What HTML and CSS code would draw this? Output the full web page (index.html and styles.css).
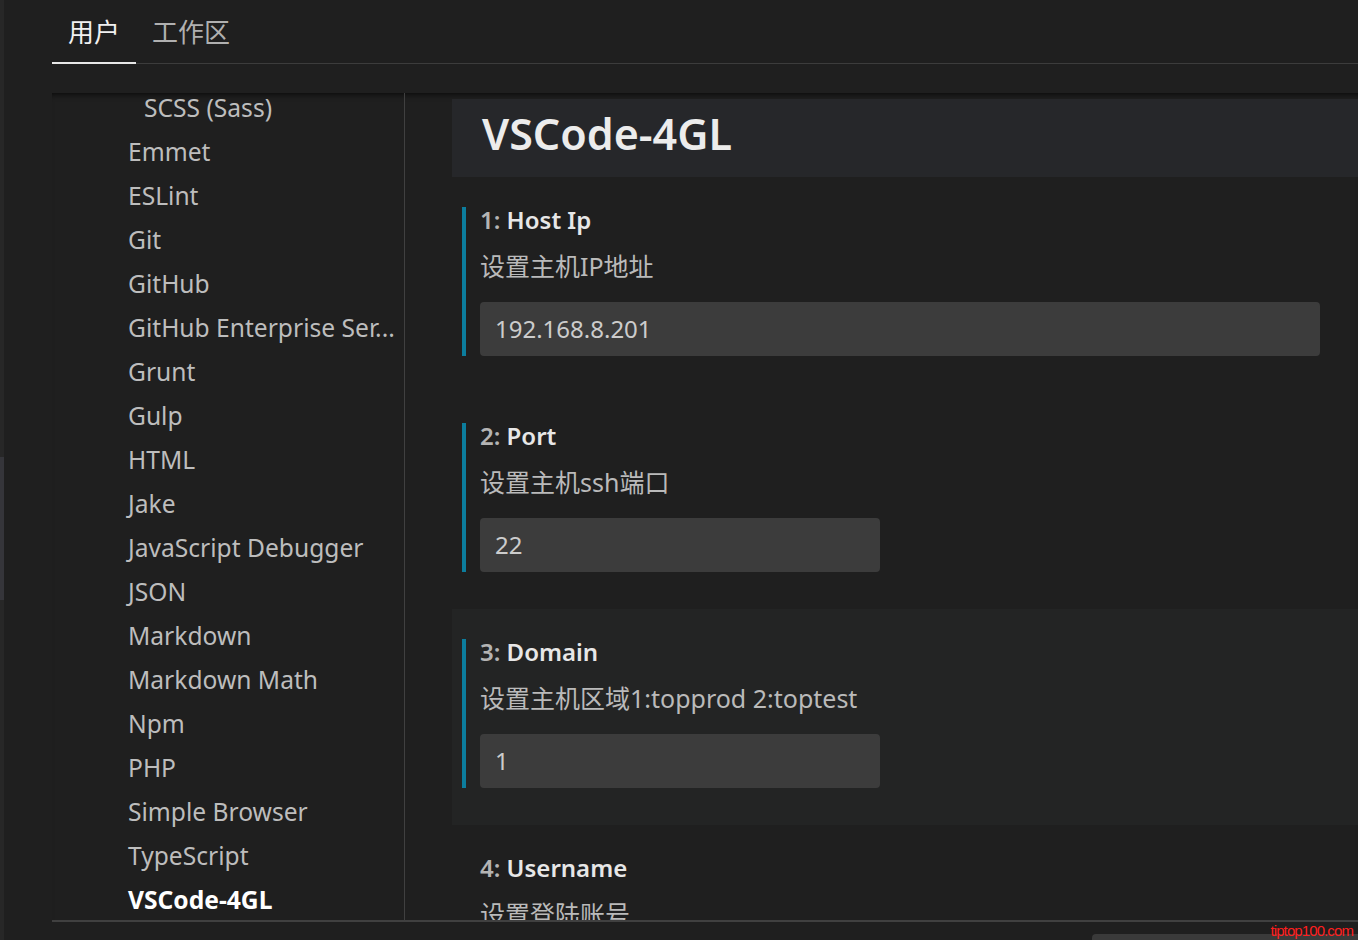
FILE: index.html
```html
<!DOCTYPE html>
<html lang="zh-CN">
<head>
  <meta charset="UTF-8" />
  <title>设置</title>
  <link rel="stylesheet" href="styles.css">
</head>
<body>

<div class="edge"><div class="edge-thumb"></div></div>

<div class="editor">
  <div class="tabs">
    <div class="tab active">用户</div>
    <div class="tab">工作区</div>
  </div>

  <div class="body">
    <aside class="toc">
      <div class="toc-list">
        <div class="toc-item nested">SCSS (Sass)</div>
        <div class="toc-item">Emmet</div>
        <div class="toc-item">ESLint</div>
        <div class="toc-item">Git</div>
        <div class="toc-item">GitHub</div>
        <div class="toc-item">GitHub Enterprise Ser...</div>
        <div class="toc-item">Grunt</div>
        <div class="toc-item">Gulp</div>
        <div class="toc-item">HTML</div>
        <div class="toc-item">Jake</div>
        <div class="toc-item">JavaScript Debugger</div>
        <div class="toc-item">JSON</div>
        <div class="toc-item">Markdown</div>
        <div class="toc-item">Markdown Math</div>
        <div class="toc-item">Npm</div>
        <div class="toc-item">PHP</div>
        <div class="toc-item">Simple Browser</div>
        <div class="toc-item">TypeScript</div>
        <div class="toc-item active">VSCode-4GL</div>
      </div>
    </aside>

    <main class="list">
      <div class="group-title">VSCode-4GL</div>

      <div class="setting">
        <div class="setting-inner modified">
          <div class="setting-title"><span class="cat">1: </span>Host Ip</div>
          <div class="setting-desc">设置主机IP地址</div>
          <div class="setting-input wide">192.168.8.201</div>
        </div>
      </div>

      <div class="setting">
        <div class="setting-inner modified">
          <div class="setting-title"><span class="cat">2: </span>Port</div>
          <div class="setting-desc">设置主机ssh端口</div>
          <div class="setting-input">22</div>
        </div>
      </div>

      <div class="setting focused">
        <div class="setting-inner modified">
          <div class="setting-title"><span class="cat">3: </span>Domain</div>
          <div class="setting-desc">设置主机区域1:topprod 2:toptest</div>
          <div class="setting-input">1</div>
        </div>
      </div>

      <div class="setting">
        <div class="setting-inner">
          <div class="setting-title"><span class="cat">4: </span>Username</div>
          <div class="setting-desc">设置登陆账号</div>
          <div class="setting-input">admin</div>
        </div>
      </div>
    </main>
  </div>

  <div class="status">
    <div class="hscroll"></div>
    <div class="watermark">tiptop100.com</div>
  </div>
</div>

</body>
</html>
```

FILE: styles.css
```css
* {
  box-sizing: border-box;
  font-family: 'Segoe UI', 'Noto Sans', 'Noto Sans CJK SC', sans-serif;
}

html, body {
  height: 100%;
}

body {
  margin: 0;
  background-color: #1f1f1f;
  color: #cccccc;
  display: flex;
  overflow: hidden;
}

.edge {
  width: 4px;
  background-color: #272727;
  flex-shrink: 0;
}

.edge-thumb {
  margin-top: 457px;
  height: 143px;
  background-color: #35353a;
}

.editor {
  flex-grow: 1;
  display: flex;
  flex-direction: column;
  padding-left: 48px;
  min-width: 0;
}

/* tabs */
.tabs {
  display: flex;
  height: 64px;
  border-bottom: 1px solid #3c3c3c;
  flex-shrink: 0;
}

.tab {
  padding: 0 16px;
  font-size: 26px;
  line-height: 62px;
  color: #b0b0b0;
  font-family: 'Noto Sans CJK SC', sans-serif;
}

.tab.active {
  color: #f0f0f0;
  border-bottom: 2px solid #e7e7e7;
  height: 64px;
}

/* body */
.body {
  margin-top: 29px;
  flex-grow: 1;
  display: flex;
  min-height: 0;
  overflow: hidden;
  box-shadow: inset 0 6px 6px -5px rgba(0, 0, 0, 0.8);
  border-bottom: 2px solid #404040;
}

.toc {
  width: 353px;
  flex-shrink: 0;
  border-right: 1px solid #404040;
  overflow: hidden;
}

.toc-list {
  margin-top: -7px;
  padding-left: 76px;
}

.toc-item {
  height: 44px;
  line-height: 44px;
  font-size: 24.6px;
  color: #bdbdbd;
  white-space: nowrap;
}

.toc-item.nested {
  padding-left: 16px;
}

.toc-item.active {
  color: #ffffff;
  font-weight: 700;
}

.list {
  flex-grow: 1;
  padding-top: 6px;
  padding-left: 47px;
  overflow: hidden;
}

.group-title {
  height: 78px;
  background-color: #26272a;
  padding-left: 30px;
  font-size: 43px;
  line-height: 70px;
  font-weight: 600;
  color: #ececec;
}

.setting {
  padding: 30px 0 37px 10px;
}

.setting.focused {
  background-color: #232424;
}

.setting-inner {
  padding-left: 14px;
  border-left: 4px solid transparent;
}

.setting-inner.modified {
  border-left-color: #0c7d9d;
}

.setting-title {
  height: 26px;
  line-height: 26px;
  font-size: 24px;
  font-weight: 600;
  color: #e7e7e7;
}

.setting-title .cat {
  color: #b4b4b4;
}

.setting-desc {
  margin-top: 13px;
  line-height: 40px;
  font-size: 25px;
  color: #bababa;
}

.setting-input {
  margin-top: 16px;
  width: 400px;
  height: 54px;
  line-height: 54px;
  padding-left: 15px;
  background-color: #3c3c3c;
  border-radius: 4px;
  font-size: 24px;
  color: #cccccc;
}

.setting-input.wide {
  width: 840px;
}

/* bottom strip */
.status {
  height: 18px;
  flex-shrink: 0;
  display: flex;
  justify-content: flex-end;
  align-items: flex-start;
  margin-left: -48px;
}

.hscroll {
  margin-top: 12px;
  width: 266px;
  height: 6px;
  background-color: #3a3a3a;
  border-radius: 4px 0 0 0;
}

.watermark {
  position: absolute;
  right: 5px;
  bottom: 1px;
  font-family: 'Liberation Sans', sans-serif;
  font-size: 15px;
  line-height: 16px;
  color: #ff1e1e;
  letter-spacing: -0.9px;
}
```
